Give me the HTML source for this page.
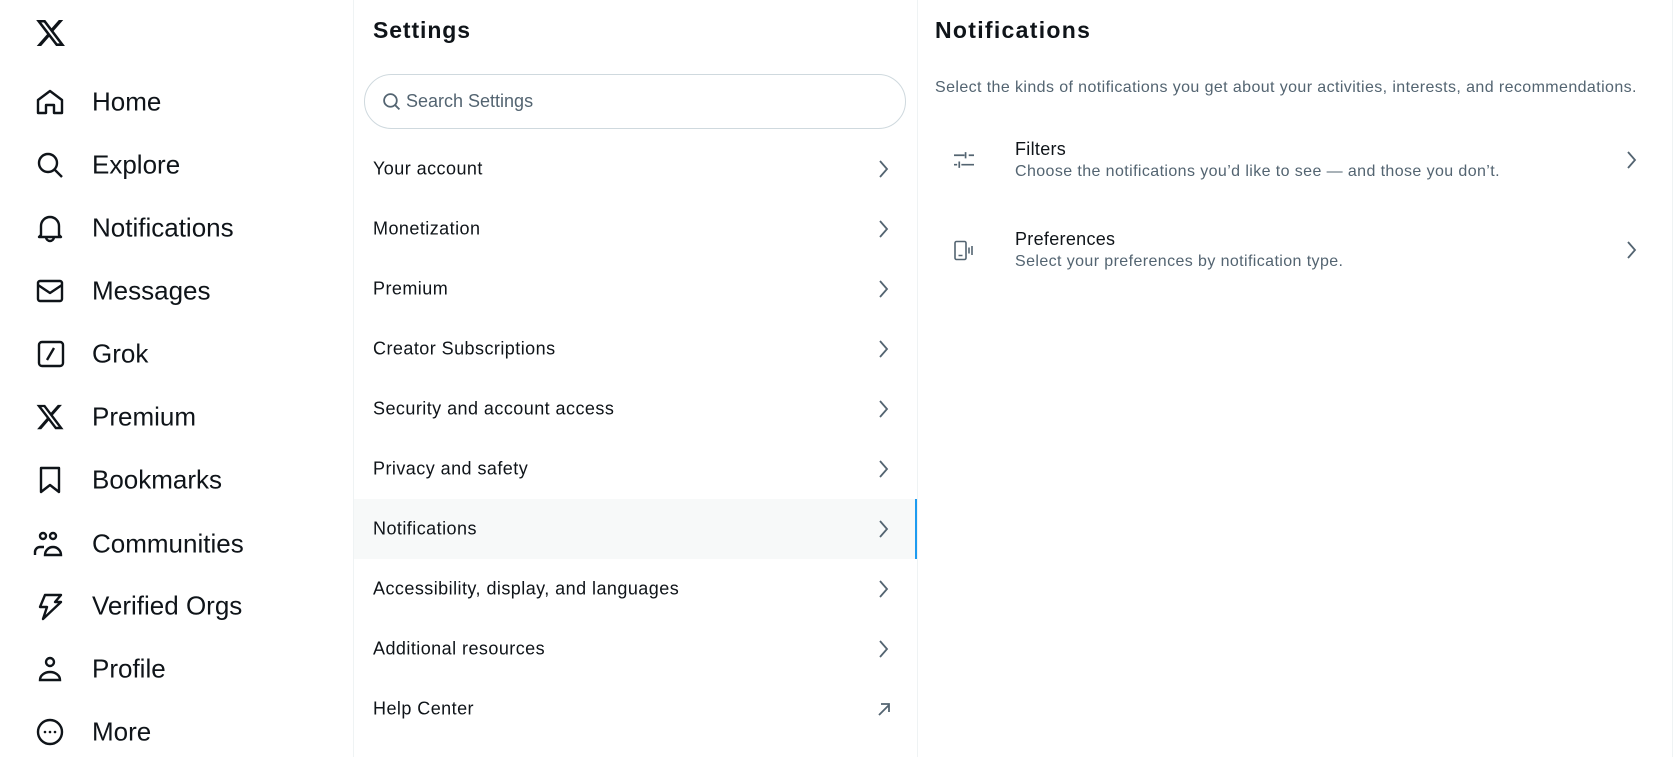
<!DOCTYPE html>
<html><head><meta charset="utf-8"><style>
*{margin:0;padding:0;box-sizing:border-box}
body{width:1673px;height:757px;background:#fff;font-family:"Liberation Sans",sans-serif;color:#0f1419;position:relative;overflow:hidden}
.a{position:absolute}
.nav{left:92px;font-size:26px;transform:translateY(-50%);white-space:nowrap}
.ic{left:35px;width:30px;height:30px;transform:translateY(-50%)}
.row{left:354px;width:563px;height:60px}
.row span{position:absolute;left:19px;top:50%;transform:translateY(-50%);font-size:18px;letter-spacing:0.45px;white-space:nowrap}
.row svg{position:absolute;left:523px;top:20px}
</style></head><body>
<div class="a" style="left:353px;top:0;width:1px;height:757px;background:#eff3f4"></div>
<div class="a" style="left:917px;top:0;width:1px;height:757px;background:#eff3f4"></div>
<div class="a" style="left:1672px;top:0;width:1px;height:757px;background:#eff3f4"></div>

<svg class="a" style="left:34px;top:17px" width="33" height="32" viewBox="0 0 24 24"><path fill="#0f1419" d="M18.244 2.25h3.308l-7.227 8.26 8.502 11.24H16.17l-5.214-6.817L4.99 21.75H1.68l7.730-8.835L1.254 2.25H8.08l4.713 6.231zm-1.161 17.52h1.833L7.084 4.126H5.117z"/></svg>

<svg class="a ic" style="top:102px" viewBox="0 0 30 30" fill="none" stroke="#0f1419" stroke-width="2.4" stroke-linejoin="round"><path d="M3 13L15 4l12 9v13H19v-8h-8v8H3z"/></svg>
<div class="a nav" style="top:102px">Home</div>
<svg class="a ic" style="top:165px" viewBox="0 0 30 30" fill="none" stroke="#0f1419" stroke-width="2.4"><circle cx="13" cy="13" r="9"/><path d="M20 20l7 7"/></svg>
<div class="a nav" style="top:165px">Explore</div>
<svg class="a ic" style="top:228px" viewBox="0 0 30 30" fill="none" stroke="#0f1419" stroke-width="2.4" stroke-linejoin="round"><path d="M6 22V13a9 9 0 0118 0v9l2 2H4zM11 24a4 4 0 008 0"/></svg>
<div class="a nav" style="top:228px">Notifications</div>
<svg class="a ic" style="top:291px" viewBox="0 0 30 30" fill="none" stroke="#0f1419" stroke-width="2.4" stroke-linejoin="round"><rect x="3" y="5" width="24" height="20" rx="2"/><path d="M3 9l12 8 12-8"/></svg>
<div class="a nav" style="top:291px">Messages</div>
<svg class="a ic" style="top:354px" viewBox="0 0 30 30" fill="none" stroke="#0f1419" stroke-width="2.4"><rect x="4" y="3" width="24" height="24" rx="3"/><path d="M12 21l7-12"/></svg>
<div class="a nav" style="top:354px">Grok</div>
<svg class="a ic" style="top:417px" viewBox="0 0 24 24"><path fill="#0f1419" d="M18.244 2.25h3.308l-7.227 8.26 8.502 11.24H16.17l-5.214-6.817L4.99 21.75H1.68l7.73-8.835L1.254 2.25H8.08l4.713 6.231zm-1.161 17.52h1.833L7.084 4.126H5.117z"/></svg>
<div class="a nav" style="top:417px">Premium</div>
<svg class="a ic" style="top:480px" viewBox="0 0 30 30" fill="none" stroke="#0f1419" stroke-width="2.4" stroke-linejoin="round"><path d="M6 3h18v24l-9-7-9 7z"/></svg>
<div class="a nav" style="top:480px">Bookmarks</div>
<svg class="a ic" style="top:544px;left:33px;width:34px" viewBox="0 0 34 30" fill="none" stroke="#0f1419" stroke-width="2.4"><circle cx="10" cy="7" r="3"/><circle cx="20" cy="7" r="3"/><path d="M2 26v-3a5 5 0 015-5h4M12 26a8 8 0 0116 0z"/></svg>
<div class="a nav" style="top:544px">Communities</div>
<svg class="a ic" style="top:606px" viewBox="0 0 30 30" fill="none" stroke="#0f1419" stroke-width="2.4" stroke-linejoin="round"><path d="M10 4h16l-6 7h6L8 28l4-12H5z"/></svg>
<div class="a nav" style="top:606px">Verified Orgs</div>
<svg class="a ic" style="top:669px" viewBox="0 0 30 30" fill="none" stroke="#0f1419" stroke-width="2.4"><circle cx="15" cy="8" r="4"/><path d="M5 26a10 8 0 0120 0z"/></svg>
<div class="a nav" style="top:669px">Profile</div>
<svg class="a ic" style="top:732px" viewBox="0 0 30 30" fill="none" stroke="#0f1419" stroke-width="2.4"><circle cx="15" cy="15" r="12"/><circle cx="10" cy="15" r="1.3" fill="#0f1419" stroke="none"/><circle cx="15" cy="15" r="1.3" fill="#0f1419" stroke="none"/><circle cx="20" cy="15" r="1.3" fill="#0f1419" stroke="none"/></svg>
<div class="a nav" style="top:732px">More</div>

<div class="a" style="left:373px;top:17px;font-size:23px;font-weight:bold;letter-spacing:0.9px">Settings</div>
<div class="a" style="left:364px;top:74px;width:542px;height:55px;border:1px solid #cfd9de;border-radius:28px"></div>
<svg class="a" style="left:382px;top:92px" width="19" height="19" viewBox="0 0 18 18" fill="none" stroke="#536471" stroke-width="1.7"><circle cx="8" cy="8" r="6"/><path d="M12.5 12.5l4 4"/></svg>
<div class="a" style="left:406px;top:91px;font-size:18px;color:#536471">Search Settings</div>

<div class="a row" style="top:139px"><span>Your account</span><svg width="12" height="20" viewBox="0 0 12 20" fill="none" stroke="#536471" stroke-width="1.8"><path d="M3 2l7 8-7 8"/></svg></div>
<div class="a row" style="top:199px"><span>Monetization</span><svg width="12" height="20" viewBox="0 0 12 20" fill="none" stroke="#536471" stroke-width="1.8"><path d="M3 2l7 8-7 8"/></svg></div>
<div class="a row" style="top:259px"><span>Premium</span><svg width="12" height="20" viewBox="0 0 12 20" fill="none" stroke="#536471" stroke-width="1.8"><path d="M3 2l7 8-7 8"/></svg></div>
<div class="a row" style="top:319px"><span>Creator Subscriptions</span><svg width="12" height="20" viewBox="0 0 12 20" fill="none" stroke="#536471" stroke-width="1.8"><path d="M3 2l7 8-7 8"/></svg></div>
<div class="a row" style="top:379px"><span>Security and account access</span><svg width="12" height="20" viewBox="0 0 12 20" fill="none" stroke="#536471" stroke-width="1.8"><path d="M3 2l7 8-7 8"/></svg></div>
<div class="a row" style="top:439px"><span>Privacy and safety</span><svg width="12" height="20" viewBox="0 0 12 20" fill="none" stroke="#536471" stroke-width="1.8"><path d="M3 2l7 8-7 8"/></svg></div>
<div class="a row" style="top:499px;background:#f7f9f9;border-right:2px solid #1d9bf0"><span>Notifications</span><svg width="12" height="20" viewBox="0 0 12 20" fill="none" stroke="#536471" stroke-width="1.8"><path d="M3 2l7 8-7 8"/></svg></div>
<div class="a row" style="top:559px"><span>Accessibility, display, and languages</span><svg width="12" height="20" viewBox="0 0 12 20" fill="none" stroke="#536471" stroke-width="1.8"><path d="M3 2l7 8-7 8"/></svg></div>
<div class="a row" style="top:619px"><span>Additional resources</span><svg width="12" height="20" viewBox="0 0 12 20" fill="none" stroke="#536471" stroke-width="1.8"><path d="M3 2l7 8-7 8"/></svg></div>
<div class="a row" style="top:679px"><span>Help Center</span><svg width="14" height="20" viewBox="0 0 14 20" fill="none" stroke="#536471" stroke-width="1.8"><path d="M2 16L12 6M4 5h8v8"/></svg></div>

<div class="a" style="left:935px;top:17px;font-size:23px;font-weight:bold;letter-spacing:1.3px">Notifications</div>
<div class="a" style="left:935px;top:79px;font-size:16px;letter-spacing:0.4px;color:#536471;white-space:nowrap">Select the kinds of notifications you get about your activities, interests, and recommendations.</div>

<svg class="a" style="left:954px;top:151px" width="20" height="19" viewBox="0 0 19 18" fill="none" stroke="#536471" stroke-width="1.6"><path d="M0 4h10M14 4h5M11 1v6M0 13h3M7 13h12M5 10v6"/></svg>
<div class="a" style="left:1015px;top:139px;font-size:18px;letter-spacing:0.3px">Filters</div>
<div class="a" style="left:1015px;top:163px;font-size:16px;letter-spacing:0.4px;color:#536471;white-space:nowrap">Choose the notifications you’d like to see — and those you don’t.</div>
<svg class="a" style="left:1625px;top:150px" width="12" height="20" viewBox="0 0 12 20" fill="none" stroke="#536471" stroke-width="1.8"><path d="M3 2l7 8-7 8"/></svg>

<svg class="a" style="left:954px;top:240px" width="22" height="21" viewBox="0 0 22 20" fill="none" stroke="#536471" stroke-width="1.6"><rect x="1" y="1" width="11" height="18" rx="1.5"/><path d="M4.5 15h4M15 7v6M18 5.5v9"/></svg>
<div class="a" style="left:1015px;top:229px;font-size:18px;letter-spacing:0.3px">Preferences</div>
<div class="a" style="left:1015px;top:253px;font-size:16px;letter-spacing:0.4px;color:#536471;white-space:nowrap">Select your preferences by notification type.</div>
<svg class="a" style="left:1625px;top:240px" width="12" height="20" viewBox="0 0 12 20" fill="none" stroke="#536471" stroke-width="1.8"><path d="M3 2l7 8-7 8"/></svg>
</body></html>
